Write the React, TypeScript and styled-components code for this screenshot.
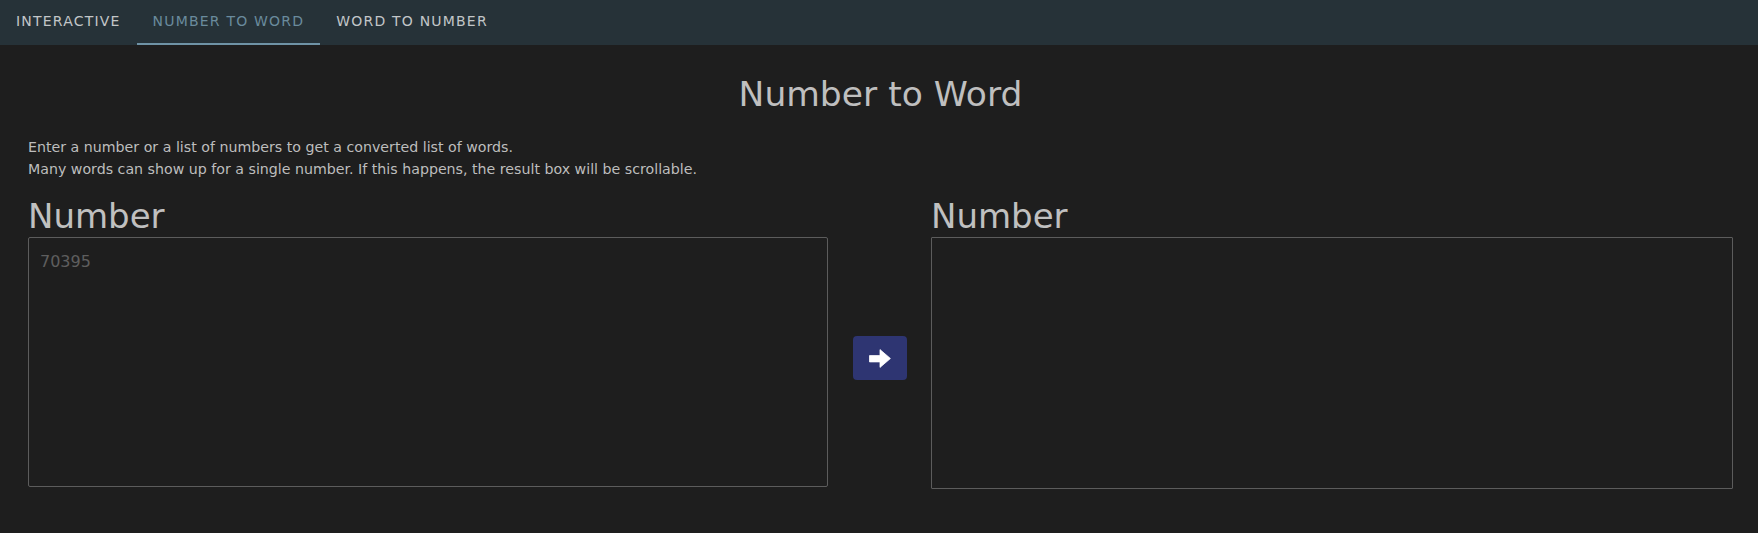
import React, { useState } from 'react'
import styled, { createGlobalStyle } from 'styled-components'

const GlobalStyle = createGlobalStyle`
	html, body {
		margin: 0;
		padding: 0;
		background: #1e1e1e;
		font-family: 'DejaVu Sans', Verdana, sans-serif;
	}
`

const tabs = ['Interactive', 'Number to Word', 'Word to Number']

const ArrowIcon = () => (
	<svg width="22" height="19" viewBox="0 0 22 19" aria-hidden="true">
		<path
			d="M0.5 6.6 H11 V0.6 L21.4 9.5 L11 18.4 V12.9 H0.5 Z"
			fill="#ffffff"
			stroke="#ffffff"
			strokeWidth="0.8"
			strokeLinejoin="round"
		/>
	</svg>
)

const App = () => {
	const [active, setActive] = useState(1)
	const [value, setValue] = useState('')

	return (
		<>
			<GlobalStyle />
			<TabBar>
				{tabs.map((t, i) => (
					<Tab key={t} $active={i === active} onClick={() => setActive(i)}>
						{t}
					</Tab>
				))}
			</TabBar>
			<Main>
				<Title>Number to Word</Title>
				<Intro>
					Enter a number or a list of numbers to get a converted list of words.
					<br />
					Many words can show up for a single number. If this happens, the result box will be
					scrollable.
				</Intro>
				<Converter>
					<Label>Number</Label>
					<span />
					<Label>Number</Label>
					<InputBox
						placeholder="70395"
						value={value}
						onChange={(e) => setValue(e.target.value)}
					/>
					<ConvertButton aria-label="Convert">
						<ArrowIcon />
					</ConvertButton>
					<ResultBox />
				</Converter>
			</Main>
		</>
	)
}

const TabBar = styled.nav`
	display: flex;
	height: 45px;
	background: #263238;
`

const Tab = styled.button<{ $active: boolean }>`
	display: flex;
	align-items: center;
	box-sizing: border-box;
	height: 45px;
	padding: 0 16px 2px;
	border: none;
	border-bottom: 2px solid ${(p) => (p.$active ? '#6f93a6' : 'transparent')};
	background: transparent;
	color: ${(p) => (p.$active ? '#6a8b9d' : '#c2c6c8')};
	font-family: 'DejaVu Sans', sans-serif;
	font-size: 14px;
	letter-spacing: 1.2px;
	text-transform: uppercase;
	cursor: pointer;
`

const Main = styled.main`
	padding: 29px 25px 0 28px;
	color: #bdbdbd;
`

const Title = styled.h1`
	margin: 0 0 22px;
	text-align: center;
	font-size: 34.5px;
	font-weight: 400;
	line-height: 1.2;
	color: #bfbfbf;
`

const Intro = styled.p`
	margin: 0 0 17px;
	font-size: 14.2px;
	line-height: 21.5px;
	color: #bdbdbd;
`

const Converter = styled.section`
	display: grid;
	grid-template-columns: 800px 54px 1fr;
	column-gap: 24.5px;
	align-items: start;
`

const Label = styled.h2`
	margin: 0;
	font-size: 34px;
	font-weight: 400;
	line-height: 1.17;
	color: #c0c0c0;
`

const InputBox = styled.textarea`
	box-sizing: border-box;
	width: 100%;
	height: 250px;
	margin: 0;
	padding: 12px 11px 10px;
	border: 1px solid #5c5c5c;
	border-radius: 2px;
	background: #1e1e1e;
	color: #bdbdbd;
	font-family: 'DejaVu Sans', sans-serif;
	font-size: 16px;
	line-height: 1.5;
	resize: none;
	outline: none;

	&::placeholder {
		color: #5e5e5e;
	}
`

const ResultBox = styled.div`
	box-sizing: border-box;
	height: 252px;
	border: 1px solid #5c5c5c;
	border-radius: 1px;
	overflow-y: auto;
`

const ConvertButton = styled.button`
	align-self: center;
	display: flex;
	align-items: center;
	justify-content: center;
	width: 54px;
	height: 44px;
	margin-bottom: 10px;
	padding: 0;
	border: none;
	border-radius: 4px;
	background: #2e3572;
	cursor: pointer;
`

export default App
